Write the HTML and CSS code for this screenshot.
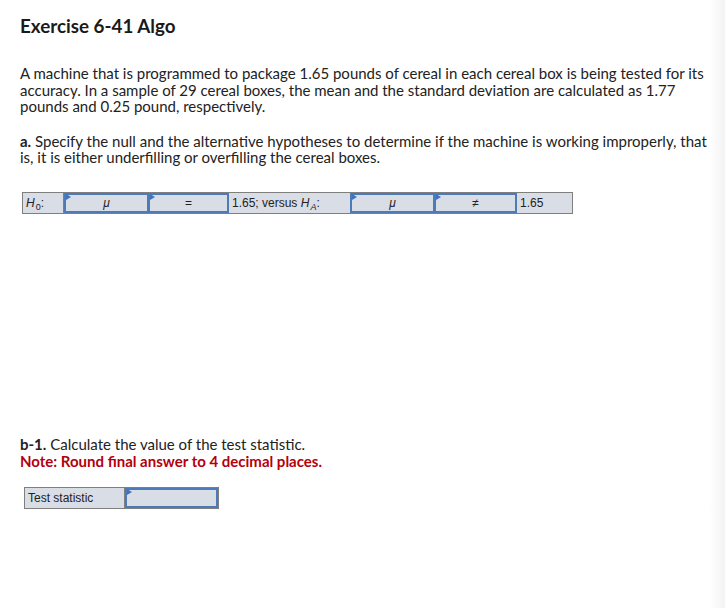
FILE: index.html
```html
<!DOCTYPE html>
<html>
<head>
<meta charset="utf-8">
<link rel="stylesheet" href="styles.css">
</head>
<body>
<div class="page">
  <h1 class="title">Exercise 6-41 Algo</h1>
  <p class="intro">A machine that is programmed to package 1.65 pounds of cereal in each cereal box is being tested for its accuracy. In a sample of 29 cereal boxes, the mean and the standard deviation are calculated as 1.77 pounds and 0.25 pound, respectively.</p>
  <p class="part"><b>a.</b> Specify the null and the alternative hypotheses to determine if the machine is working improperly, that is, it is either underfilling or overfilling the cereal boxes.</p>
  <div class="row hyp">
    <div class="cell lab"><span><i>H</i><sub>0</sub>:</span></div>
    <div class="cell drop w84"><span><i>μ</i></span></div>
    <div class="cell drop w80"><span>=</span></div>
    <div class="cell txt w120"><span>1.65; versus <i>H</i><sub><i>A</i></sub>:</span></div>
    <div class="cell drop w84"><span><i>μ</i></span></div>
    <div class="cell drop w82"><span>≠</span></div>
    <div class="cell txt w57"><span>1.65</span></div>
  </div>
  <p class="part b1"><b>b-1.</b> Calculate the value of the test statistic.<br><span class="note">Note: Round final answer to 4 decimal places.</span></p>
  <div class="row ts">
    <div class="cell txt w100"><span>Test statistic</span></div>
    <div class="cell drop input w94"></div>
  </div>
</div>
<div class="edge"></div>
</body>
</html>
```
FILE: styles.css
```css
html, body {
  margin: 0;
  padding: 0;
  background: #ffffff;
}
body {
  width: 725px;
  height: 608px;
  overflow: hidden;
  position: relative;
}
.edge {
  position: absolute;
  top: 0;
  right: 0;
  width: 16px;
  height: 608px;
  background: linear-gradient(to right, rgba(240,240,240,0), #f3f3f3);
}
.page {
  padding: 14px 12px 0 20px;
  font-family: Lato, "Open Sans", sans-serif;
  color: #222;
}
.title {
  font-size: 18.8px;
  font-weight: 700;
  margin: 0 0 27px 0;
  line-height: 24px;
  color: #1a1a1a;
}
.intro, .part {
  font-size: 15px;
  line-height: 16.6px;
  margin: 0;
}
.intro { margin-bottom: 18px; }
.part b { font-weight: 700; }
.row {
  display: flex;
  font-family: "Liberation Sans", Arial, sans-serif;
  font-size: 12px;
  color: #222;
  border: 1px solid #7f7f7f;
  background: #d9dde6;
  height: 20px;
  box-sizing: content-box;
}
.hyp {
  margin: 26px 0 0 2px;
  width: 549px;
}
.cell {
  box-sizing: border-box;
  height: 20px;
  display: flex;
  align-items: center;
  position: relative;
  flex: none;
}
.cell span { white-space: nowrap; }
.lab {
  width: 41px;
  padding-left: 3px;
  border-right: 1px solid #7f7f7f;
}
.cell sub { font-size: 9px; vertical-align: -3px; line-height: 0; margin-left: 1px; }
.drop {
  justify-content: center;
  border: 2px solid #4d7ab8;
}
.drop::before {
  content: "";
  position: absolute;
  left: 0;
  top: -1px;
  border-left: 5px solid #3e73c0;
  border-top: 3px solid transparent;
  border-bottom: 3px solid transparent;
}
.drop + .drop { border-left-width: 1px; }
.txt {
  padding-left: 3px;
}
.w84 { width: 85px; }
.w80 { width: 80px; }
.w82 { width: 82px; }
.w120 { width: 121px; }
.w57 { width: 56px; }
.w100 { width: 100px; border-right: 1px solid #7f7f7f; }
.w94 { width: 93px; }
.b1 {
  margin-top: 222px;
}
.note {
  color: #b3000c;
  font-weight: 700;
}
.ts {
  margin: 18px 0 0 4px;
  width: 193px;
}
```
